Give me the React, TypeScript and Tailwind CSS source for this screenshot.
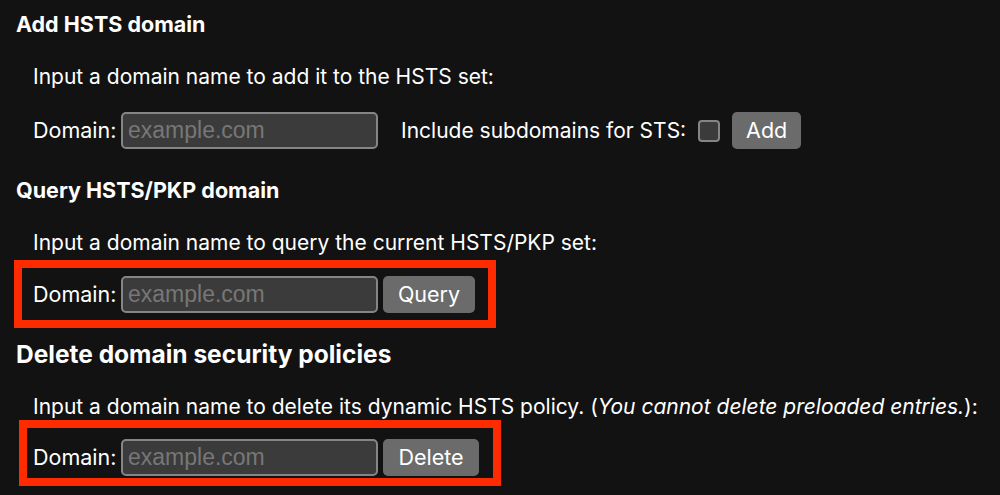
import React from 'react';

function DomainInput() {
  return (
    <input
      type="text"
      placeholder="example.com"
      className="h-[37px] w-[257px] rounded-[5px] border-2 border-[#858585] bg-[#3b3b3b] px-[5px] text-[23px] text-white placeholder:text-[#777777] outline-none"
      style={{ fontFamily: '"Liberation Sans", Arial, sans-serif' }}
    />
  );
}

function Btn({ label, width }: { label: string; width: string }) {
  return (
    <button className={`h-[37px] ${width} rounded-[5px] bg-[#6b6b6b] text-[21.5px] text-white`}>
      {label}
    </button>
  );
}

export default function App() {
  return (
    <div
      className="h-[495px] w-full overflow-hidden bg-[#121212] text-white"
      style={{ fontFamily: 'Inter, "Noto Sans", sans-serif' }}
    >
      {/* Add HSTS domain */}
      <h2 className="pl-4 pt-[12px] text-[21.5px] font-bold leading-[24px]">Add HSTS domain</h2>
      <p className="mt-[29px] pl-[33px] text-[21px] leading-[24px]">
        Input a domain name to add it to the HSTS set:
      </p>
      <div className="mt-[23px] flex items-center pl-[33px] text-[21.5px]">
        <span className="w-[88px]">Domain:</span>
        <DomainInput />
        <span className="ml-[23px] text-[21px]">Include subdomains for STS:</span>
        <span className="ml-[12px] h-[22px] w-[22px] rounded-[4px] border-2 border-[#858585] bg-[#3b3b3b]" />
        <span className="ml-[12px]">
          <Btn label="Add" width="w-[69px]" />
        </span>
      </div>

      {/* Query HSTS/PKP domain */}
      <h2 className="mt-[29px] pl-4 text-[21.5px] font-bold leading-[24px]">Query HSTS/PKP domain</h2>
      <p className="mt-[29px] pl-[33px] text-[21px] leading-[24px]">
        Input a domain name to query the current HSTS/PKP set:
      </p>
      <div className="ml-[14px] mt-[5px] flex w-fit items-center border-[8px] border-[#fe2a00] pb-[7px] pl-[11px] pr-[13px] pt-[8px] text-[21.5px]">
        <span className="w-[88px]">Domain:</span>
        <DomainInput />
        <span className="ml-[5px]">
          <Btn label="Query" width="w-[92px]" />
        </span>
      </div>

      {/* Delete domain security policies */}
      <h2 className="mt-[13px] pl-4 text-[24.5px] font-bold leading-[26px]">Delete domain security policies</h2>
      <p className="mt-[28px] pl-[33px] text-[21px] leading-[24px]">
        Input a domain name to delete its dynamic HSTS policy. (<i>You cannot delete preloaded entries.</i>):
      </p>
      <div className="ml-[19px] mt-[1px] flex w-fit items-center border-[8px] border-[#fe2a00] pb-[2px] pl-[6px] pr-[14px] pt-[11px] text-[21.5px]">
        <span className="w-[88px]">Domain:</span>
        <DomainInput />
        <span className="ml-[5px]">
          <Btn label="Delete" width="w-[96px]" />
        </span>
      </div>
    </div>
  );
}
